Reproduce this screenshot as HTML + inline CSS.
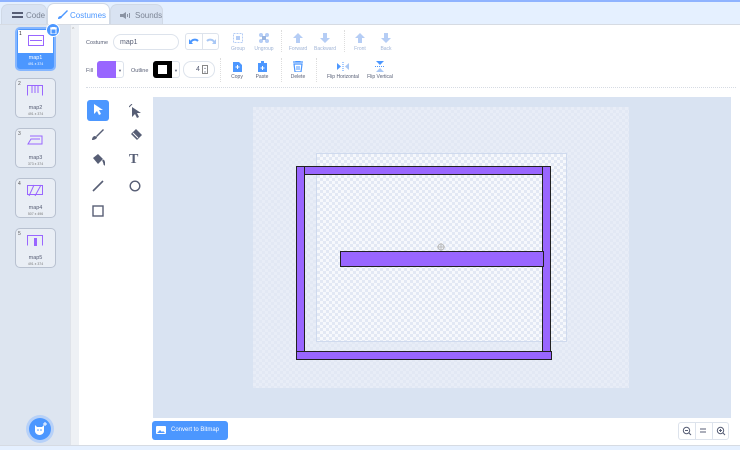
<!DOCTYPE html>
<html><head><style>
*{box-sizing:border-box;margin:0;padding:0}
body{width:740px;height:450px;overflow:hidden;background:#e5f0ff;font-family:"Liberation Sans",sans-serif;position:relative;color:#575e75}
.a{position:absolute}
.tab{position:absolute;top:4px;height:20px;border:1px solid #d0d9e6;border-bottom:none;border-radius:7px 7px 0 0;background:#d9e3f2;font-size:8px;color:#7b8494;padding:6px 0 0 24px}
.card{position:absolute;left:15px;width:41px;height:40px;border:1px solid #b8c1d0;border-radius:5px;background:#e9eef5;font-size:5px;text-align:center}
.card b{position:absolute;left:2px;top:2px;font-weight:normal;font-size:5px;color:#555}
.card .n{position:absolute;left:0;right:0;top:26px;font-size:5.5px;color:#575e75}
.card .d{position:absolute;left:0;right:0;top:33px;font-size:3.5px;color:#777}
.lbl{font-size:5px;color:#a0b4d6;position:absolute;text-align:center}
.lbl2{font-size:5px;color:#575e75;position:absolute;text-align:center}
.bar{position:absolute;background:#9966ff;border:1.3px solid #222}
.chk{background-color:#eef2f9;background-image:linear-gradient(45deg,#e2e8f4 25%,transparent 25%,transparent 75%,#e2e8f4 75%),linear-gradient(45deg,#e2e8f4 25%,transparent 25%,transparent 75%,#e2e8f4 75%);background-size:6px 6px;background-position:0 0,3px 3px}
</style></head><body>
<div class="a" style="left:0;top:0;width:740px;height:2px;background:#8fb3ff"></div>
<div class="tab" style="left:1px;width:46px">Code
<svg class="a" style="left:10px;top:7px" width="11" height="6"><rect x="0" y="0" width="11" height="2" fill="#575e75"/><rect x="0" y="4" width="11" height="2" fill="#575e75"/></svg></div>
<div class="tab" style="left:110px;width:53px">Sounds<svg class="a" style="left:9px;top:7px" width="11" height="7"><path d="M0 2h3l3-2v7l-3-2H0z" fill="#8a93a3"/><rect x="7" y="2" width="1" height="3" fill="#8a93a3"/><rect x="9" y="1" width="1" height="5" fill="#8a93a3"/></svg></div>
<div class="tab" style="left:47px;top:3px;width:63px;height:22px;background:#fff;color:#4c97ff;border-color:#d0d9e6;padding-top:7px;padding-left:22px">Costumes<svg class="a" style="left:10px;top:6px" width="10" height="9"><path d="M9 0L3 6l1 1 6-6z M3 6c-2 0-3 1-3 3 2 0 4-1 4-2z" fill="#4c97ff"/></svg></div>
<div class="a" style="left:0;top:24px;width:740px;height:1px;background:#d6dbe3"></div>
<div class="a" style="left:0;top:25px;width:70px;height:420px;background:#dde5f0"></div>
<div class="a" style="left:70px;top:25px;width:9px;height:420px;background:#eef1f5;border-left:1px solid #dfe3ea"></div>
<div class="a" style="left:72px;top:27px;font-size:5px;color:#aaa">^</div>
<div class="card" style="top:27px;height:44px;background:#4c97ff;border:2px solid #85b6ff">
<div class="a" style="left:1px;top:1px;width:35px;height:23px;background:#fff"></div>
<b style="color:#222">1</b>
<svg class="a" style="left:11px;top:6px" width="16" height="11"><rect x=".5" y=".5" width="15" height="10" fill="none" stroke="#9966ff"/><rect x="2" y="5" width="12" height="1" fill="#9966ff"/></svg>
<div class="n" style="color:#fff">map1</div><div class="d" style="color:#fff">491 x 374</div></div>
<div class="a" style="left:46px;top:23px;width:14px;height:14px;border-radius:7px;background:#4c97ff;border:1px solid #fff"><svg class="a" style="left:3px;top:3px" width="7" height="7"><path d="M0 1h7M2 1V0h3v1M1 2h5v5H1z" stroke="#fff" fill="none" stroke-width="1"/></svg></div>
<div class="card" style="top:78px"><b>2</b><svg class="a" style="left:11px;top:6px" width="16" height="11"><path d="M.5 10.5V.5h15v10M5 1v7M8 1v7M11 1v7" fill="none" stroke="#9966ff"/></svg><div class="n">map2</div><div class="d">491 x 374</div></div>
<div class="card" style="top:128px"><b>3</b><svg class="a" style="left:11px;top:6px" width="16" height="11"><path d="M3 1h12v8H1l3-5h9" fill="none" stroke="#9966ff"/></svg><div class="n">map3</div><div class="d">373 x 374</div></div>
<div class="card" style="top:178px"><b>4</b><svg class="a" style="left:11px;top:5px" width="16" height="12"><rect x=".5" y="1.5" width="15" height="9" fill="none" stroke="#9966ff"/><path d="M2 12L7 1M8 12L14 1" stroke="#9966ff"/></svg><div class="n">map4</div><div class="d">507 x 496</div></div>
<div class="card" style="top:228px"><b>5</b><svg class="a" style="left:11px;top:6px" width="16" height="11"><path d="M.5 10.5V.5h15v10" fill="none" stroke="#9966ff"/><rect x="7" y="3" width="3" height="8" fill="#9966ff"/></svg><div class="n">map5</div><div class="d">491 x 374</div></div>
<div class="a" style="left:26px;top:415px;width:28px;height:28px;border-radius:14px;background:#b7d1f8"></div>
<div class="a" style="left:29px;top:418px;width:22px;height:22px;border-radius:11px;background:#4c97ff"><svg class="a" style="left:4px;top:4px" width="15" height="14"><path d="M2 3l2 2h5l2-2v6c0 2-2 4-4.5 4S2 11 2 9z" fill="#fff"/><path d="M12 0v4M10 2h4" stroke="#fff"/><circle cx="5" cy="8" r=".8" fill="#4c97ff"/><circle cx="8" cy="8" r=".8" fill="#4c97ff"/></svg></div>
<div class="a" style="left:79px;top:25px;width:661px;height:420px;background:#fff"></div>
<div class="a" style="left:0;top:445px;width:740px;height:5px;background:#e5f0ff;border-top:1px solid #d6dbe3"></div>
<div class="a" style="left:86px;top:40px;font-size:5.5px;color:#575e75">Costume</div>
<div class="a" style="left:113px;top:34px;width:66px;height:16px;border:1px solid #dde3ec;border-radius:8px;font-size:7px;padding:4px 0 0 6px;color:#575e75">map1</div>
<div class="a" style="left:185px;top:33px;width:34px;height:17px;border:1px solid #dde3ec;border-radius:3px"></div>
<div class="a" style="left:202px;top:33px;width:1px;height:17px;background:#dde3ec"></div>
<svg class="a" style="left:189px;top:37px" width="10" height="8"><path d="M1 6c2-4 6-4 8-2" fill="none" stroke="#4c97ff" stroke-width="2"/><path d="M0 2v5h4z" fill="#4c97ff"/></svg>
<svg class="a" style="left:206px;top:37px" width="10" height="8"><path d="M9 6C7 2 3 2 1 4" fill="none" stroke="#a8c7f5" stroke-width="2"/><path d="M10 2v5H6z" fill="#a8c7f5"/></svg>
<svg class="a" style="left:232px;top:32px" width="12" height="12"><rect x="1.5" y="1.5" width="9" height="9" fill="none" stroke="#b5cdf5" stroke-dasharray="2 1"/><rect x="4" y="4" width="4" height="4" fill="#b5cdf5"/></svg>
<div class="lbl" style="left:226px;top:46px;width:24px">Group</div>
<svg class="a" style="left:258px;top:32px" width="12" height="12"><circle cx="3" cy="3" r="2" fill="#b5cdf5"/><circle cx="9" cy="3" r="2" fill="#b5cdf5"/><circle cx="3" cy="9" r="2" fill="#b5cdf5"/><circle cx="9" cy="9" r="2" fill="#b5cdf5"/><rect x="4" y="4" width="4" height="4" fill="#9ab5e0"/></svg>
<div class="lbl" style="left:252px;top:46px;width:24px">Ungroup</div>
<div class="a" style="left:281px;top:30px;width:1px;height:22px;border-left:1px dotted #ddd"></div>
<svg class="a" style="left:292px;top:33px" width="12" height="10"><path d="M6 0l5 5H8v5H4V5H1z" fill="#b5cdf5"/></svg>
<div class="lbl" style="left:286px;top:46px;width:24px">Forward</div>
<svg class="a" style="left:319px;top:33px" width="12" height="10"><path d="M6 10l5-5H8V0H4v5H1z" fill="#b5cdf5"/></svg>
<div class="lbl" style="left:311px;top:46px;width:28px">Backward</div>
<div class="a" style="left:344px;top:30px;width:1px;height:22px;border-left:1px dotted #ddd"></div>
<svg class="a" style="left:354px;top:33px" width="12" height="10"><path d="M6 0l5 5H8v5H4V5H1z" fill="#b5cdf5"/></svg>
<div class="lbl" style="left:348px;top:46px;width:24px">Front</div>
<svg class="a" style="left:380px;top:33px" width="12" height="10"><path d="M6 10l5-5H8V0H4v5H1z" fill="#b5cdf5"/></svg>
<div class="lbl" style="left:374px;top:46px;width:24px">Back</div>
<div class="a" style="left:86px;top:68px;font-size:5.5px">Fill</div>
<div class="a" style="left:97px;top:61px;width:27px;height:17px;border:1px solid #dde3ec;border-radius:3px;font-size:4px;padding:6px 0 0 20px">▼</div>
<div class="a" style="left:97px;top:61px;width:19px;height:17px;background:#9966ff;border-radius:3px 0 0 3px"></div>
<div class="a" style="left:131px;top:68px;font-size:5.5px">Outline</div>
<div class="a" style="left:153px;top:61px;width:27px;height:17px;border:1px solid #dde3ec;border-radius:3px;font-size:4px;padding:6px 0 0 20px">▼</div>
<div class="a" style="left:153px;top:61px;width:19px;height:17px;background:#000;border-radius:3px 0 0 3px"><div class="a" style="left:5px;top:4px;width:9px;height:9px;background:#fff"></div></div>
<div class="a" style="left:183px;top:61px;width:32px;height:17px;border:1px solid #dde3ec;border-radius:8px;font-size:7px;padding:4px 0 0 12px">4</div>
<div class="a" style="left:202px;top:65px;width:6px;height:9px;border:1px solid #888;font-size:3px;line-height:4px;text-align:center">▴<br>▾</div>
<div class="a" style="left:220px;top:58px;width:1px;height:24px;border-left:1px dotted #ddd"></div>
<svg class="a" style="left:233px;top:61px" width="9" height="11"><path d="M0 1h6l3 3v7H0z" fill="#4c97ff"/><path d="M4.5 4v4M2.5 6h4" stroke="#fff"/></svg>
<div class="lbl2" style="left:225px;top:74px;width:24px">Copy</div>
<svg class="a" style="left:258px;top:61px" width="9" height="11"><path d="M0 2h9v9H0z M3 0h3v3H3z" fill="#4c97ff"/><path d="M4.5 5v4M2.5 7h4" stroke="#fff"/></svg>
<div class="lbl2" style="left:250px;top:74px;width:24px">Paste</div>
<div class="a" style="left:281px;top:58px;width:1px;height:24px;border-left:1px dotted #ddd"></div>
<svg class="a" style="left:293px;top:61px" width="10" height="11"><path d="M0 1h10M3 1V0h4v1M1 3h8l-1 8H2z" stroke="#4c97ff" fill="none" stroke-width="1.2"/><path d="M4 5v4M6 5v4" stroke="#4c97ff"/></svg>
<div class="lbl2" style="left:286px;top:74px;width:24px">Delete</div>
<div class="a" style="left:316px;top:58px;width:1px;height:24px;border-left:1px dotted #ddd"></div>
<svg class="a" style="left:337px;top:62px" width="12" height="9"><path d="M0 1l4 3.5L0 8z" fill="#4c97ff"/><path d="M12 1L8 4.5 12 8z" fill="#a8c7f5"/><path d="M6 0v9" stroke="#4c97ff" stroke-dasharray="1 1"/></svg>
<div class="lbl2" style="left:322px;top:74px;width:42px">Flip Horizontal</div>
<svg class="a" style="left:375px;top:61px" width="10" height="11"><path d="M1 0h8L5 4z" fill="#4c97ff"/><path d="M1 11h8L5 7z" fill="#a8c7f5"/><path d="M0 5.5h10" stroke="#4c97ff" stroke-dasharray="1 1"/></svg>
<div class="lbl2" style="left:362px;top:74px;width:36px">Flip Vertical</div>
<div class="a" style="left:86px;top:87px;width:650px;border-top:1px dotted #d6dbe3"></div>
<div class="a" style="left:87px;top:100px;width:22px;height:21px;background:#4c97ff;border-radius:3px"></div>
<svg class="a" style="left:94px;top:104px" width="9" height="12"><path d="M0 0v10l3-3 2 4 2-1-2-4h4z" fill="#fff"/></svg>
<svg class="a" style="left:129px;top:104px" width="12" height="14"><path d="M3 3v10l3-3 2 4 2-1-2-4h4z" fill="#575e75"/><path d="M0 3l3-3" stroke="#575e75"/></svg>
<svg class="a" style="left:92px;top:129px" width="12" height="12"><path d="M11 0L4 7l1 1 7-7z" fill="#575e75"/><path d="M3 7c-2 0-3 2-3 4 2 0 5-1 5-3z" fill="#575e75"/></svg>
<svg class="a" style="left:130px;top:129px" width="12" height="12"><path d="M6 0l6 6-5 5-6-6z" fill="#575e75"/><path d="M3 4l5 5" stroke="#fff"/></svg>
<svg class="a" style="left:92px;top:154px" width="13" height="12"><path d="M1 4l5-4 5 5-5 5z" fill="#575e75"/><path d="M11 6c1 2 2 4 1 5" stroke="#575e75" stroke-width="2"/></svg>
<div class="a" style="left:129px;top:152px;font-size:14px;font-weight:bold;color:#575e75;font-family:'Liberation Serif',serif">T</div>
<svg class="a" style="left:92px;top:180px" width="12" height="12"><path d="M1 11L11 1" stroke="#575e75" stroke-width="1.6"/></svg>
<svg class="a" style="left:129px;top:180px" width="12" height="12"><circle cx="6" cy="6" r="4.8" fill="none" stroke="#575e75" stroke-width="1.4"/></svg>
<svg class="a" style="left:92px;top:205px" width="12" height="12"><rect x="1" y="1" width="10" height="10" fill="none" stroke="#575e75" stroke-width="1.4"/></svg>
<div class="a" style="left:153px;top:97px;width:578px;height:321px;background:#d9e3f2"></div>
<div class="a chk" style="left:253px;top:107px;width:376px;height:281px;background-color:#e8edf7"></div>
<div class="a chk" style="left:316px;top:153px;width:251px;height:189px;background-color:#f6f8fc;border:1px solid #cfdaee"></div>
<div class="bar" style="left:296px;top:166px;width:255px;height:9px"></div>
<div class="bar" style="left:296px;top:166px;width:9px;height:194px"></div>
<div class="bar" style="left:542px;top:166px;width:9px;height:186px"></div>
<div class="bar" style="left:296px;top:351px;width:256px;height:9px"></div>
<div class="bar" style="left:340px;top:251px;width:204px;height:16px"></div>
<svg class="a" style="left:437px;top:243px" width="8" height="8"><circle cx="4" cy="4" r="3" fill="none" stroke="#bbb"/><path d="M4 0v8M0 4h8" stroke="#bbb"/></svg>
<div class="a" style="left:152px;top:421px;width:76px;height:19px;background:#4c97ff;border-radius:3px;color:#fff;font-size:6px;line-height:19px;padding-left:19px">Convert to Bitmap</div>
<svg class="a" style="left:156px;top:426px" width="10" height="8"><rect x="0" y="0" width="10" height="8" rx="1" fill="#fff"/><path d="M1 7l3-3 2 2 1-1 2 2z" fill="#4c97ff"/></svg>
<div class="a" style="left:678px;top:422px;width:51px;height:18px;border:1px solid #dde3ec;border-radius:3px"></div>
<div class="a" style="left:695px;top:422px;width:1px;height:18px;background:#dde3ec"></div>
<div class="a" style="left:712px;top:422px;width:1px;height:18px;background:#dde3ec"></div>
<svg class="a" style="left:682px;top:426px" width="10" height="10"><circle cx="4.5" cy="4.5" r="3.2" fill="none" stroke="#575e75"/><path d="M7 7l2 2M3 4.5h3" stroke="#575e75"/></svg>
<svg class="a" style="left:700px;top:428px" width="6" height="5"><path d="M0 1h6M0 4h6" stroke="#575e75"/></svg>
<svg class="a" style="left:716px;top:426px" width="10" height="10"><circle cx="4.5" cy="4.5" r="3.2" fill="none" stroke="#575e75"/><path d="M7 7l2 2M3 4.5h3M4.5 3v3" stroke="#575e75"/></svg>
</body></html>
